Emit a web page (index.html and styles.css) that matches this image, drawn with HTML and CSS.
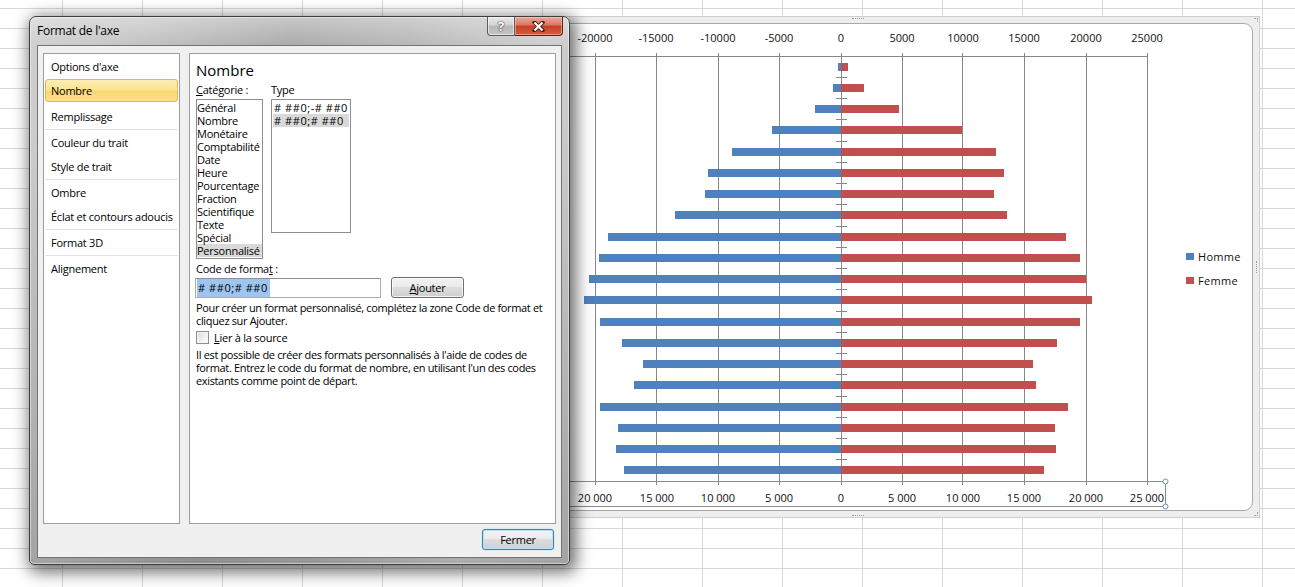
FILE: index.html
```html
<!DOCTYPE html>
<html lang="fr">
<head>
<meta charset="utf-8">
<title>Format de l'axe</title>
<link rel="stylesheet" href="styles.css">
</head>
<body>
<div class="sheet">

  <div class="chart-frame">
    <span class="grip grip-top"></span>
    <span class="grip grip-bottom"></span>
    <span class="grip grip-right"></span>
    <span class="grip-corner grip-tr"></span>
    <span class="grip-corner grip-br"></span>
    <div class="chart-area">
      <svg class="chart" viewBox="528 24 724 486" width="724" height="486">
        <g class="grid" shape-rendering="crispEdges">
          <line x1="534" y1="56.5" x2="1148" y2="56.5"/>
          <line x1="534" y1="481.5" x2="1148" y2="481.5"/>
          <line x1="534.5" y1="53" x2="534.5" y2="485"/>
          <line x1="595.5" y1="53" x2="595.5" y2="485"/>
          <line x1="656.5" y1="53" x2="656.5" y2="485"/>
          <line x1="718.5" y1="53" x2="718.5" y2="485"/>
          <line x1="779.5" y1="53" x2="779.5" y2="485"/>
          <line x1="841.5" y1="53" x2="841.5" y2="485"/>
          <line x1="902.5" y1="53" x2="902.5" y2="485"/>
          <line x1="962.5" y1="53" x2="962.5" y2="485"/>
          <line x1="1024.5" y1="53" x2="1024.5" y2="485"/>
          <line x1="1086.5" y1="53" x2="1086.5" y2="485"/>
          <line x1="1147.5" y1="53" x2="1147.5" y2="485"/>
        </g>
        <g class="ticks" shape-rendering="crispEdges">
          <line x1="836" y1="77.5" x2="847" y2="77.5"/>
          <line x1="836" y1="98.5" x2="847" y2="98.5"/>
          <line x1="836" y1="119.5" x2="847" y2="119.5"/>
          <line x1="836" y1="141.5" x2="847" y2="141.5"/>
          <line x1="836" y1="162.5" x2="847" y2="162.5"/>
          <line x1="836" y1="183.5" x2="847" y2="183.5"/>
          <line x1="836" y1="204.5" x2="847" y2="204.5"/>
          <line x1="836" y1="226.5" x2="847" y2="226.5"/>
          <line x1="836" y1="247.5" x2="847" y2="247.5"/>
          <line x1="836" y1="268.5" x2="847" y2="268.5"/>
          <line x1="836" y1="289.5" x2="847" y2="289.5"/>
          <line x1="836" y1="311.5" x2="847" y2="311.5"/>
          <line x1="836" y1="332.5" x2="847" y2="332.5"/>
          <line x1="836" y1="353.5" x2="847" y2="353.5"/>
          <line x1="836" y1="374.5" x2="847" y2="374.5"/>
          <line x1="836" y1="396.5" x2="847" y2="396.5"/>
          <line x1="836" y1="417.5" x2="847" y2="417.5"/>
          <line x1="836" y1="438.5" x2="847" y2="438.5"/>
          <line x1="836" y1="459.5" x2="847" y2="459.5"/>
        </g>
        <g class="homme" shape-rendering="crispEdges">
          <rect x="838" y="63" width="3" height="8"/>
          <rect x="833" y="84" width="8" height="8"/>
          <rect x="815" y="105" width="26" height="8"/>
          <rect x="772" y="126" width="69" height="8"/>
          <rect x="732" y="148" width="109" height="8"/>
          <rect x="708" y="169" width="133" height="8"/>
          <rect x="705" y="190" width="136" height="8"/>
          <rect x="675" y="211" width="166" height="8"/>
          <rect x="608" y="233" width="233" height="8"/>
          <rect x="599" y="254" width="242" height="8"/>
          <rect x="589" y="275" width="252" height="8"/>
          <rect x="584" y="296" width="257" height="8"/>
          <rect x="600" y="318" width="241" height="8"/>
          <rect x="622" y="339" width="219" height="8"/>
          <rect x="643" y="360" width="198" height="8"/>
          <rect x="634" y="381" width="207" height="8"/>
          <rect x="600" y="403" width="241" height="8"/>
          <rect x="618" y="424" width="223" height="8"/>
          <rect x="616" y="445" width="225" height="8"/>
          <rect x="624" y="466" width="217" height="8"/>
        </g>
        <g class="femme" shape-rendering="crispEdges">
          <rect x="841" y="63" width="7" height="8"/>
          <rect x="841" y="84" width="23" height="8"/>
          <rect x="841" y="105" width="58" height="8"/>
          <rect x="841" y="126" width="121" height="8"/>
          <rect x="841" y="148" width="155" height="8"/>
          <rect x="841" y="169" width="163" height="8"/>
          <rect x="841" y="190" width="153" height="8"/>
          <rect x="841" y="211" width="166" height="8"/>
          <rect x="841" y="233" width="225" height="8"/>
          <rect x="841" y="254" width="239" height="8"/>
          <rect x="841" y="275" width="245" height="8"/>
          <rect x="841" y="296" width="251" height="8"/>
          <rect x="841" y="318" width="239" height="8"/>
          <rect x="841" y="339" width="216" height="8"/>
          <rect x="841" y="360" width="192" height="8"/>
          <rect x="841" y="381" width="195" height="8"/>
          <rect x="841" y="403" width="227" height="8"/>
          <rect x="841" y="424" width="214" height="8"/>
          <rect x="841" y="445" width="215" height="8"/>
          <rect x="841" y="466" width="203" height="8"/>
        </g>
        <g class="axis-labels">
          <text x="595" y="42">-20000</text>
          <text x="656" y="42">-15000</text>
          <text x="718" y="42">-10000</text>
          <text x="779" y="42">-5000</text>
          <text x="841" y="42">0</text>
          <text x="902" y="42">5000</text>
          <text x="963" y="42">10000</text>
          <text x="1024" y="42">15000</text>
          <text x="1086" y="42">20000</text>
          <text x="1147" y="42">25000</text>
          <text x="595" y="502">20 000</text>
          <text x="657" y="502">15 000</text>
          <text x="718" y="502">10 000</text>
          <text x="779" y="502">5 000</text>
          <text x="841" y="502">0</text>
          <text x="902" y="502">5 000</text>
          <text x="963" y="502">10 000</text>
          <text x="1024" y="502">15 000</text>
          <text x="1086" y="502">20 000</text>
          <text x="1147" y="502">25 000</text>
        </g>
        <g class="axis-sel">
          <path d="M528 481.5 H1165.5 V506.5 H528" shape-rendering="crispEdges"/>
          <circle cx="1165.5" cy="481.5" r="2.5"/>
          <circle cx="1165.5" cy="506.5" r="2.5"/>
        </g>
        <g class="legend">
          <rect class="sw-homme" x="1186" y="253" width="8" height="7"/>
          <text x="1198" y="261">Homme</text>
          <rect class="sw-femme" x="1186" y="277" width="8" height="7"/>
          <text x="1198" y="285">Femme</text>
        </g>
      </svg>
    </div>
  </div>

  <div class="dialog">
    <div class="titlebar">
      <span class="title">Format de l'axe</span>
      <div class="caption-btns">
        <button class="cap cap-help" type="button">?</button>
        <button class="cap cap-close" type="button" aria-label="Fermer">
          <svg width="13" height="11" viewBox="0 0 13 11">
            <path d="M2.5 1.5 L10.5 9.5 M10.5 1.5 L2.5 9.5" stroke="#4a1f16" stroke-width="4" stroke-linecap="square" fill="none"/>
            <path d="M2.5 1.5 L10.5 9.5 M10.5 1.5 L2.5 9.5" stroke="#ffffff" stroke-width="2.2" fill="none"/>
          </svg>
        </button>
      </div>
    </div>

    <div class="body">
      <div class="panes">
        <ul class="nav">
          <li class="first">Options d'axe</li>
          <li class="sel">Nombre</li>
          <li class="sep">Remplissage</li>
          <li>Couleur du trait</li>
          <li class="sep">Style de trait</li>
          <li>Ombre</li>
          <li class="sep">Éclat et contours adoucis</li>
          <li class="sep">Format 3D</li>
          <li>Alignement</li>
        </ul>

        <div class="page">
          <h2 class="page-title">Nombre</h2>
          <div class="lists">
            <div class="col col-cat">
              <div class="lbl"><u>C</u>atégorie :</div>
              <ul class="listbox cat">
                <li>Général</li>
                <li>Nombre</li>
                <li>Monétaire</li>
                <li>Comptabilité</li>
                <li>Date</li>
                <li>Heure</li>
                <li>Pourcentage</li>
                <li>Fraction</li>
                <li>Scientifique</li>
                <li>Texte</li>
                <li>Spécial</li>
                <li class="sel">Personnalisé</li>
              </ul>
            </div>
            <div class="col col-type">
              <div class="lbl">Type</div>
              <ul class="listbox type">
                <li class="code"># ##0;-# ##0</li>
                <li class="code sel"># ##0;# ##0</li>
              </ul>
            </div>
          </div>

          <div class="lbl code-lbl">Code de forma<u>t</u> :</div>
          <div class="code-row">
            <div class="textbox"><span class="selection code"># ##0;# ##0</span></div>
            <button class="btn btn-add" type="button"><u>A</u>jouter</button>
          </div>

          <p class="help">Pour créer un format personnalisé, complétez la zone Code de format et<br>cliquez sur Ajouter.</p>

          <div class="check-row">
            <span class="checkbox"></span>
            <span class="check-label"><u>L</u>ier à la source</span>
          </div>

          <p class="help help2">Il est possible de créer des formats personnalisés à l'aide de codes de<br>format. Entrez le code du format de nombre, en utilisant l'un des codes<br>existants comme point de départ.</p>
        </div>
      </div>

      <div class="footer">
        <button class="btn btn-default" type="button">Fermer</button>
      </div>
    </div>
  </div>

</div>
</body>
</html>
```

FILE: styles.css
```css
* {
  box-sizing: border-box;
}

html,
body {
  margin: 0;
  padding: 0;
}

body {
  width: 1295px;
  height: 587px;
  overflow: hidden;
  font-family: "Open Sans", "Noto Sans", sans-serif;
  color: #000;
}

button {
  font: inherit;
  color: inherit;
  margin: 0;
  padding: 0;
}

ul {
  list-style: none;
  margin: 0;
  padding: 0;
}

p,
h2 {
  margin: 0;
}

/* ---------- spreadsheet background ---------- */
.sheet {
  position: relative;
  width: 1295px;
  height: 587px;
  background-color: #fff;
  background-image:
    linear-gradient(to right, #d8d8d8 1px, transparent 1px),
    linear-gradient(to bottom, #d8d8d8 1px, transparent 1px);
  background-size: 80px 20px;
  background-position: 62px 8px;
}

/* ---------- chart object ---------- */
.chart-frame {
  position: absolute;
  left: 520px;
  top: 16px;
  width: 740px;
  height: 502px;
  border: 1px solid #cfcfcf;
  background: #eeeeee;
  padding: 6px;
}

.chart-area {
  width: 100%;
  height: 100%;
  background: #fff;
  border: 1px solid #a9a9a9;
  border-radius: 9px;
  overflow: hidden;
}

.chart {
  display: block;
}

.grip {
  position: absolute;
  border-color: #9a9a9a;
  border-style: dotted;
  border-width: 0;
}

.grip-top {
  left: 331px;
  top: 1px;
  width: 12px;
  border-top-width: 1px;
}

.grip-bottom {
  left: 331px;
  bottom: 1px;
  width: 12px;
  border-top-width: 1px;
}

.grip-right {
  right: 2px;
  top: 244px;
  height: 12px;
  border-left-width: 1px;
}

.grip-corner {
  position: absolute;
  width: 4px;
  height: 4px;
  border: 1px dotted #a0a0a0;
  border-width: 1px 1px 0 0;
}

.grip-tr {
  right: 1px;
  top: 1px;
}

.grip-br {
  right: 1px;
  bottom: 1px;
  border-width: 0 1px 1px 0;
}

.grid line,
.ticks line {
  stroke: #878787;
  stroke-width: 1;
}

.homme rect,
.sw-homme {
  fill: #4f81bd;
}

.femme rect,
.sw-femme {
  fill: #c0504d;
}

.axis-labels text {
  font-family: "Open Sans", "Noto Sans", sans-serif;
  font-size: 11px;
  fill: #111;
  text-anchor: middle;
}

.axis-sel path {
  fill: none;
  stroke: #8a8a8a;
  stroke-width: 1;
}

.axis-sel circle {
  fill: #fff;
  stroke: #6a8fbf;
  stroke-width: 1;
}

.legend text {
  font-family: "Open Sans", "Noto Sans", sans-serif;
  font-size: 11px;
  letter-spacing: 0.3px;
  fill: #111;
}

/* ---------- dialog window ---------- */
.dialog {
  position: absolute;
  left: 29px;
  top: 16px;
  width: 541px;
  height: 549px;
  display: flex;
  flex-direction: column;
  border: 1px solid #3e3e3e;
  border-radius: 7px 7px 5px 5px;
  background:
    linear-gradient(to bottom, rgba(255, 255, 255, 0.35) 0, rgba(255, 255, 255, 0) 30px),
    linear-gradient(to bottom, rgba(0, 0, 0, 0) 120px, rgba(0, 0, 0, 0.16) 100%),
    linear-gradient(100deg, #cfcfcf 0%, #c2c2c2 18%, #a9a9a9 42%, #b6b6b6 60%, #cdcdcd 82%, #c2c2c2 100%);
  box-shadow:
    inset 0 0 0 1px rgba(255, 255, 255, 0.45),
    3px 4px 16px 3px rgba(0, 0, 0, 0.58);
}

.titlebar {
  height: 28px;
  display: flex;
  align-items: flex-start;
  flex-shrink: 0;
}

.title {
  margin: 6px 0 0 7px;
  font-size: 12px;
  line-height: 16px;
  letter-spacing: -0.25px;
  color: #000;
}

.caption-btns {
  margin-left: auto;
  margin-right: 6px;
  display: flex;
}

.cap {
  height: 19px;
  display: flex;
  align-items: center;
  justify-content: center;
  cursor: default;
}

.cap-help {
  width: 28px;
  border: 1px solid #5c5c5c;
  border-top: none;
  border-radius: 0 0 0 4px;
  background: linear-gradient(to bottom, #e9e9e9 0%, #d2d2d2 45%, #b7b7b7 50%, #c4c4c4 100%);
  box-shadow: inset 0 0 0 1px rgba(255, 255, 255, 0.55);
  color: #fff;
  font-weight: 700;
  font-size: 13px;
  line-height: 1;
  text-shadow: 0 0 1px #333, 0 0 2px #333;
}

.cap-close {
  width: 48px;
  border: 1px solid #5a2418;
  border-top: none;
  border-left: none;
  border-radius: 0 0 4px 0;
  background: linear-gradient(to bottom, #eaab9d 0%, #d9775f 45%, #c43f27 50%, #d45e3d 100%);
  box-shadow: inset 0 0 0 1px rgba(255, 210, 200, 0.5);
}

.cap-close svg {
  display: block;
}

.body {
  flex: 1;
  display: flex;
  flex-direction: column;
  margin: 0 7px 6px 7px;
  border: 1px solid #737373;
  background: #f0f0f0;
  padding: 7px 5px 0 5px;
  font-size: 11px;
  letter-spacing: -0.25px;
  line-height: 13px;
}

.panes {
  flex: 1;
  display: flex;
  gap: 9px;
}

/* left navigation */
.nav {
  width: 137px;
  flex-shrink: 0;
  border: 1px solid #9d9d9d;
  background: #fff;
  padding-top: 1px;
}

.nav li {
  height: 24px;
  line-height: 24px;
  margin: 0 1px;
  padding-left: 6px;
  white-space: nowrap;
}

.nav li.sep {
  height: 25px;
  border-bottom: 1px solid #e3e3e3;
  margin-bottom: 1px;
}

.nav li.sel {
  height: 23px;
  line-height: 21px;
  margin-bottom: 3px;
  padding-left: 5px;
  border: 1px solid #e2b757;
  border-radius: 3px;
  background: linear-gradient(to bottom, #fdeeb4 0%, #fce392 45%, #fbd770 55%, #fcdf86 100%);
}

/* right page */
.page {
  flex: 1;
  border: 1px solid #9d9d9d;
  background: #fff;
  padding: 6px 6px 0 6px;
}

.page-title {
  font-size: 15px;
  font-weight: 400;
  line-height: 20px;
  letter-spacing: 0;
}

.lists {
  display: flex;
  gap: 8px;
  margin-top: 3px;
}

.col-cat {
  width: 67px;
}

.col-type {
  width: 80px;
}

.lbl {
  height: 13px;
  white-space: nowrap;
}

.listbox {
  margin-top: 3px;
  border: 1px solid #8c8e94;
  background: #fff;
  padding: 1px 0;
}

.listbox li {
  height: 13px;
  white-space: nowrap;
}

.listbox.cat {
  height: 160px;
}

.listbox.cat li {
  padding-left: 0;
}

.listbox.type {
  height: 134px;
}

.listbox.type li {
  margin: 0 1px;
  padding-left: 1px;
}

.listbox li.sel {
  background: #d9d9d9;
}

.code {
  letter-spacing: 0.55px;
}

.code-lbl {
  margin-top: 3px;
}

.code-row {
  display: flex;
  align-items: flex-start;
  margin-top: 2px;
}

.textbox {
  width: 186px;
  height: 20px;
  margin: 1px 0 0 -1px;
  border: 1px solid #abadb3;
  border-top-color: #8d8f95;
  background: #fff;
  padding-left: 1px;
}

.selection {
  display: inline-block;
  height: 18px;
  line-height: 18px;
  padding: 0 2px 0 1px;
  background: #9dc5ef;
}

.btn {
  height: 21px;
  border: 1px solid #707070;
  border-radius: 3px;
  background: linear-gradient(to bottom, #f2f2f2 0%, #ebebeb 50%, #dddddd 50%, #cfcfcf 100%);
  box-shadow: inset 0 0 0 1px rgba(255, 255, 255, 0.7);
  text-align: center;
  line-height: 19px;
  font-size: 11px;
  letter-spacing: -0.25px;
  cursor: default;
}

.btn-add {
  width: 73px;
  margin-left: 10px;
}

.help {
  margin-top: 3px;
  white-space: nowrap;
  letter-spacing: -0.35px;
}

.help2 {
  margin-top: 4px;
}

.check-row {
  display: flex;
  align-items: center;
  height: 13px;
  margin-top: 4px;
}

.checkbox {
  width: 13px;
  height: 13px;
  border: 1px solid #8e8f8f;
  background: linear-gradient(135deg, #dcdcdc 0%, #f4f4f4 70%, #ffffff 100%);
  box-shadow: inset 0 0 0 1px #f4f4f4;
}

.check-label {
  margin-left: 5px;
}

.footer {
  flex-shrink: 0;
  display: flex;
  justify-content: flex-end;
  padding: 5px 2px 7px 0;
}

.btn-default {
  width: 72px;
  border-color: #3c7fb1;
  box-shadow: inset 0 0 0 1px #b9e3f7, 0 0 1px #73b4dc;
}
```
